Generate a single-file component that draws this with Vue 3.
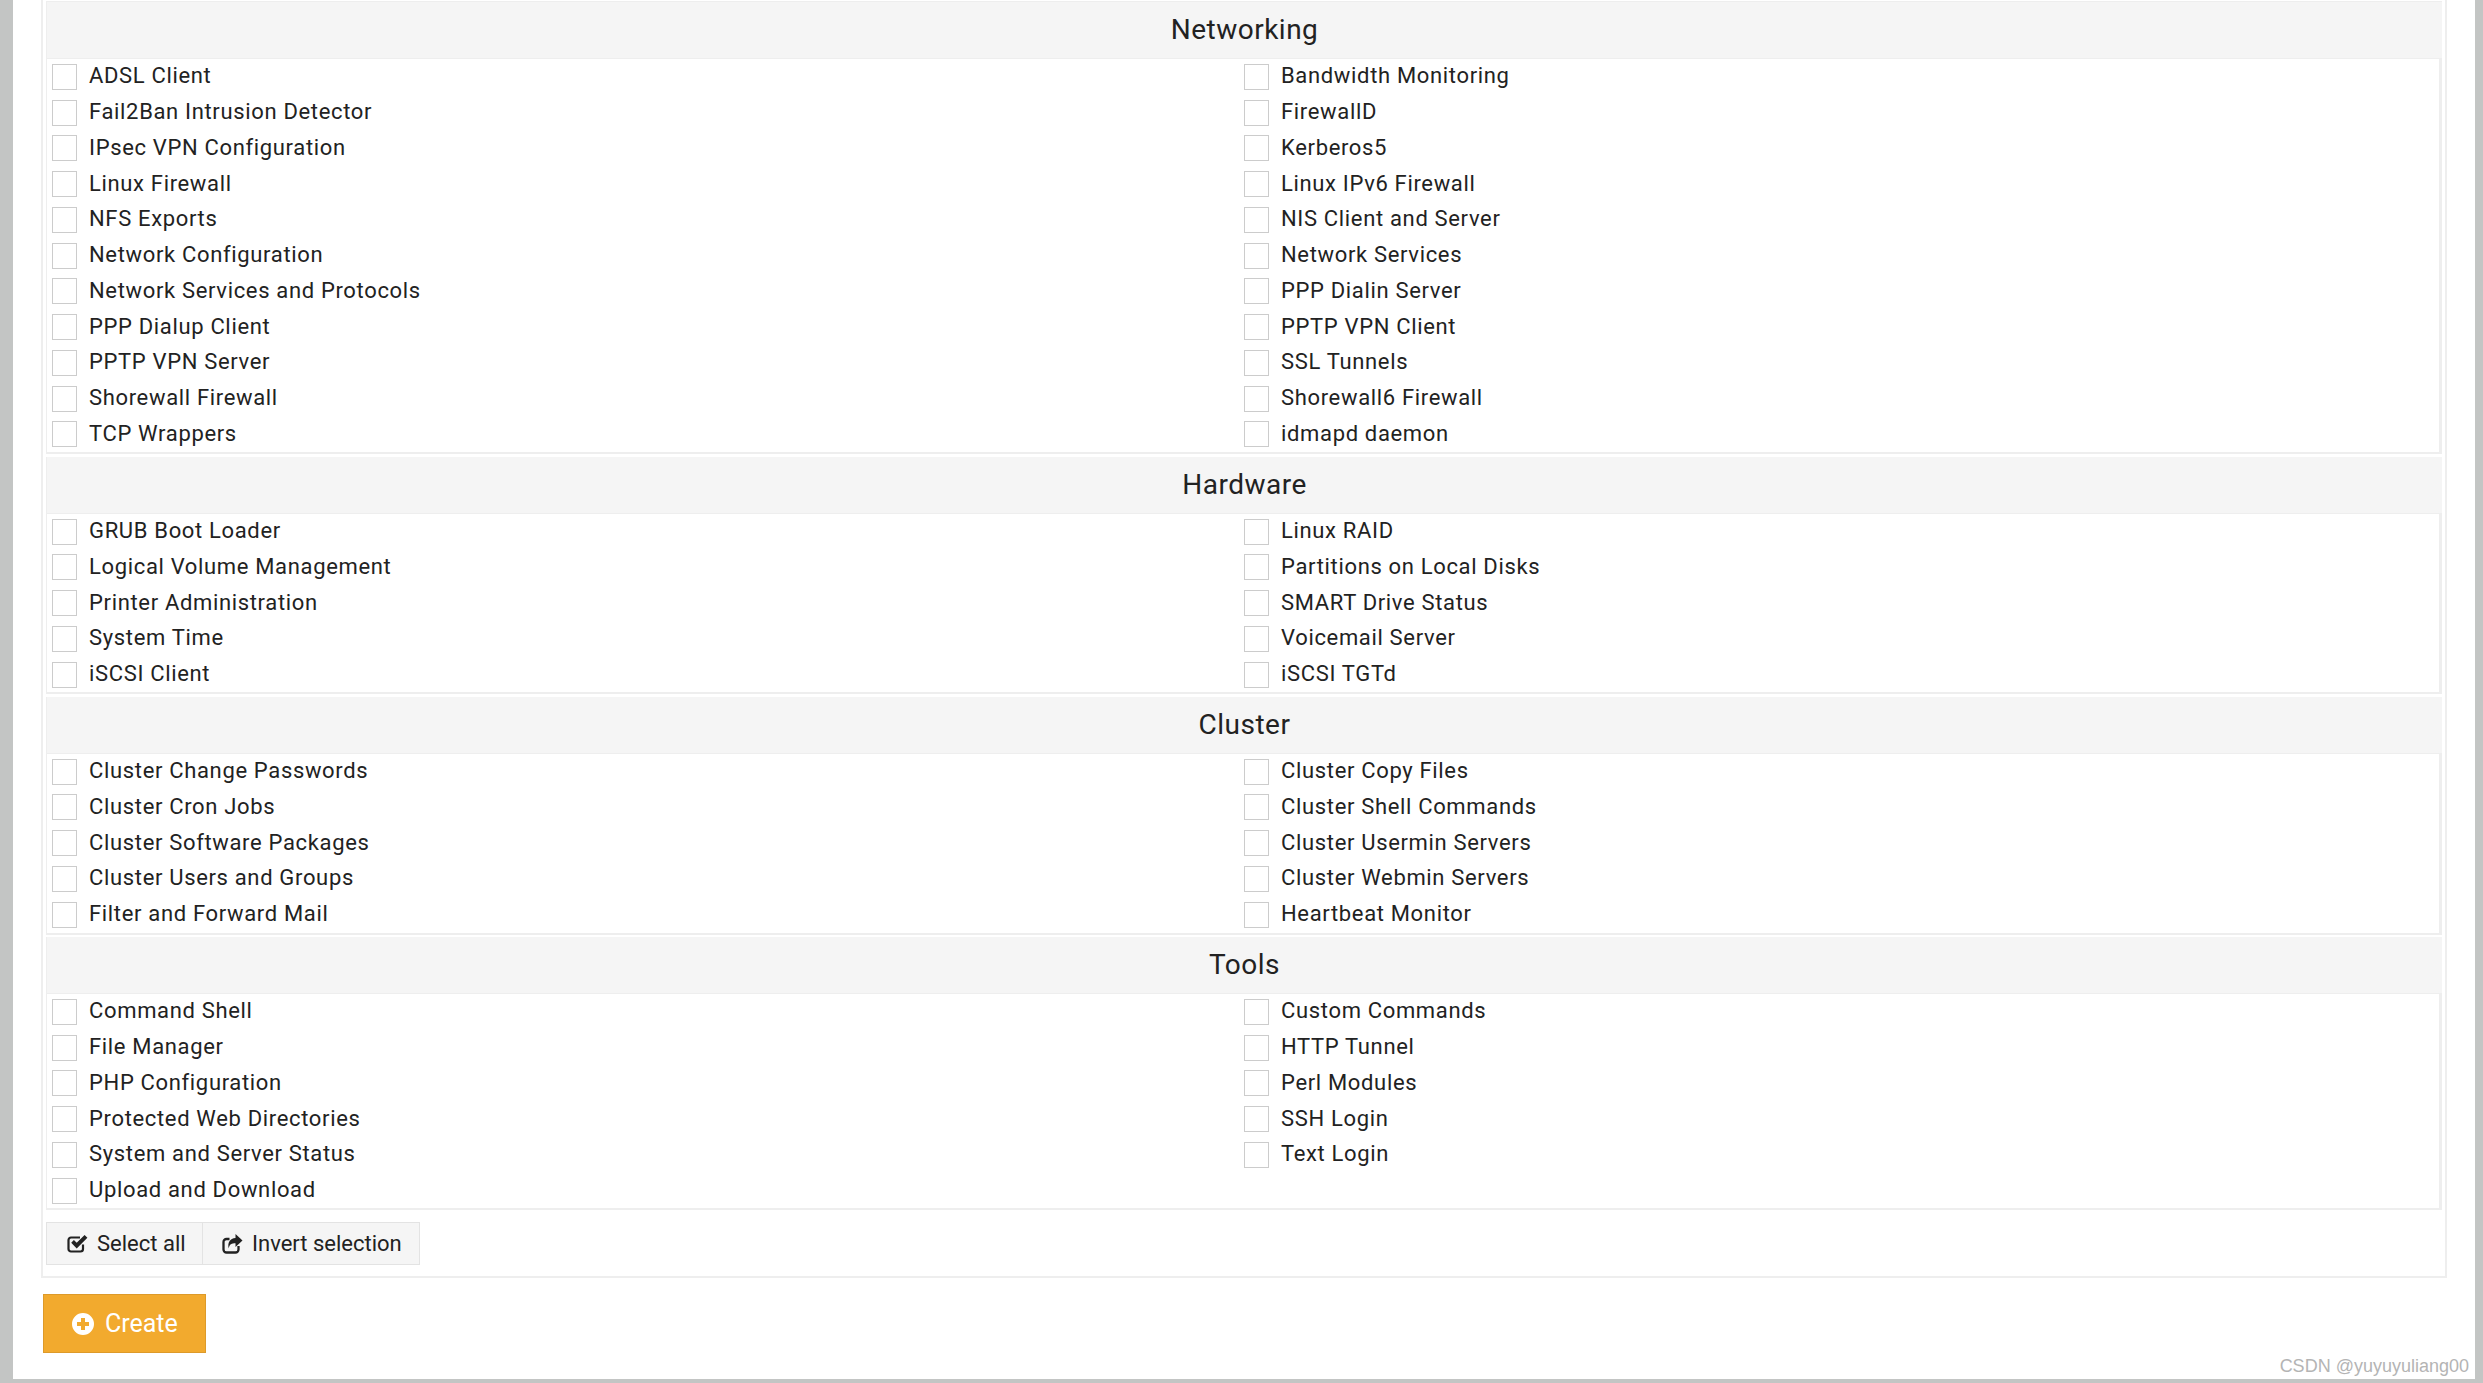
<script setup>
const sections = [
  { title: 'Networking', items: ['ADSL Client','Bandwidth Monitoring','Fail2Ban Intrusion Detector','FirewallD','IPsec VPN Configuration','Kerberos5','Linux Firewall','Linux IPv6 Firewall','NFS Exports','NIS Client and Server','Network Configuration','Network Services','Network Services and Protocols','PPP Dialin Server','PPP Dialup Client','PPTP VPN Client','PPTP VPN Server','SSL Tunnels','Shorewall Firewall','Shorewall6 Firewall','TCP Wrappers','idmapd daemon'] },
  { title: 'Hardware', items: ['GRUB Boot Loader','Linux RAID','Logical Volume Management','Partitions on Local Disks','Printer Administration','SMART Drive Status','System Time','Voicemail Server','iSCSI Client','iSCSI TGTd'] },
  { title: 'Cluster', items: ['Cluster Change Passwords','Cluster Copy Files','Cluster Cron Jobs','Cluster Shell Commands','Cluster Software Packages','Cluster Usermin Servers','Cluster Users and Groups','Cluster Webmin Servers','Filter and Forward Mail','Heartbeat Monitor'] },
  { title: 'Tools', items: ['Command Shell','Custom Commands','File Manager','HTTP Tunnel','PHP Configuration','Perl Modules','Protected Web Directories','SSH Login','System and Server Status','Text Login','Upload and Download'] },
]
</script>

<template>
  <div class="page">
    <div class="sheet">
      <div class="panel">
        <section v-for="s in sections" :key="s.title" class="section">
          <h3 class="head">{{ s.title }}</h3>
          <div class="body">
            <label v-for="item in s.items" :key="item" class="row">
              <span class="box"></span>
              <span class="label">{{ item }}</span>
            </label>
          </div>
        </section>
        <div class="btn-group">
          <button class="btn first">
            <svg class="ico" viewBox="0 0 21 19" width="21" height="19">
              <path d="M16 10.500V15a2.500 2.500 0 0 1-2.500 2.500H4A2.500 2.500 0 0 1 1.500 15V6A2.500 2.500 0 0 1 4 3.500h9" fill="none" stroke="#222" stroke-width="2.200"/>
              <path d="M4.200 8.700 6.900 6l2.800 2.800L17.600 1l2.800 2.700L9.700 14.400z" fill="#222"/>
            </svg>
            <span>Select all</span>
          </button>
          <button class="btn second">
            <svg class="ico" viewBox="0 0 21 20" width="21" height="20">
              <path d="M16.500 12v3.500a3 3 0 0 1-3 3H4.500a3 3 0 0 1-3-3V8a3 3 0 0 1 3-3h3" fill="none" stroke="#222" stroke-width="2.300"/>
              <path d="M13.500 0 20.500 6.500 13.500 13V9.300C9.800 9.300 7.400 10 6.800 14.500 5.200 9 8 4.300 13.500 4z" fill="#222"/>
            </svg>
            <span>Invert selection</span>
          </button>
        </div>
      </div>
      <button class="create">
        <svg viewBox="0 0 22 22" width="22" height="22">
          <path fill="#fff" fill-rule="evenodd" d="M11 0a11 11 0 1 1 0 22a11 11 0 0 1 0-22zM9 5v4H5v4h4v4h4v-4h4V9h-4V5z"/>
        </svg>
        <span>Create</span>
      </button>
      <span class="mark">CSDN @yuyuyuliang00</span>
    </div>
  </div>
</template>

<style scoped>
.page {
  box-sizing: border-box;
  width: 2483px;
  height: 1383px;
  overflow: hidden;
  background: #c3c5c4;
  padding: 0 8px 4px 13px;
  font-family: Roboto, "Liberation Sans", sans-serif;
  color: #222;
}
.sheet {
  position: relative;
  box-sizing: border-box;
  height: 100%;
  background: #fff;
  padding-left: 28px;
}
.panel {
  box-sizing: border-box;
  width: 2406px;
  height: 1278px;
  border: solid #eeeeee;
  border-width: 0 2px 2px 2px;
  padding: 1px 3px 0 3px;
}
.section {
  box-sizing: border-box;
  width: 2396px;
  border: solid #eeeeee;
  border-width: 0 3px 2px 1px;
  margin-bottom: 2.400px;
}
.section:nth-child(1) { border-top-width: 1px; }
.head {
  box-sizing: border-box;
  height: 57px;
  margin: 0 -3px 0 0;
  background: #f5f5f5;
  border-bottom: 1px solid #eeeeee;
  font-size: 28px;
  font-weight: 400;
  letter-spacing: 0.500px;
  line-height: 55px;
  text-align: center;
  color: #222;
}
.body {
  display: grid;
  grid-template-columns: 1192px 1192px;
  grid-auto-rows: 35.750px;
  padding-left: 5px;
}
.row {
  display: flex;
  align-items: center;
  font-size: 22px;
}
.box {
  box-sizing: border-box;
  width: 25px;
  height: 26px;
  margin-right: 12px;
  border: 1px solid #cccccc;
  background: #fff;
}
.label {
  letter-spacing: 0.660px;
  position: relative;
  top: -1px;
}
.btn-group {
  display: flex;
  margin-top: 12px;
}
.btn {
  display: flex;
  align-items: center;
  box-sizing: border-box;
  height: 43px;
  background: #f5f5f5;
  border: 1px solid #e3e3e3;
  font: inherit;
  font-size: 22px;
  color: #222;
  gap: 9px;
}
.btn.first {
  width: 156px;
  padding: 0 0 0 20px;
  border-right: 0;
}
.btn.second {
  width: 218px;
  padding: 0 0 0 19px;
}
.ico { flex: none; }
.create {
  display: flex;
  align-items: center;
  gap: 11px;
  box-sizing: border-box;
  width: 163px;
  height: 59px;
  margin: 16px 0 0 2px;
  padding: 0 0 0 28px;
  background: #f2aa2e;
  border: 1px solid #dd9a2a;
  color: #fff;
  font: inherit;
  font-size: 25px;
}
.mark {
  position: absolute;
  right: 6px;
  bottom: 2px;
  font-family: "Liberation Sans", sans-serif;
  font-size: 18px;
  color: #b4b4b4;
}
</style>
